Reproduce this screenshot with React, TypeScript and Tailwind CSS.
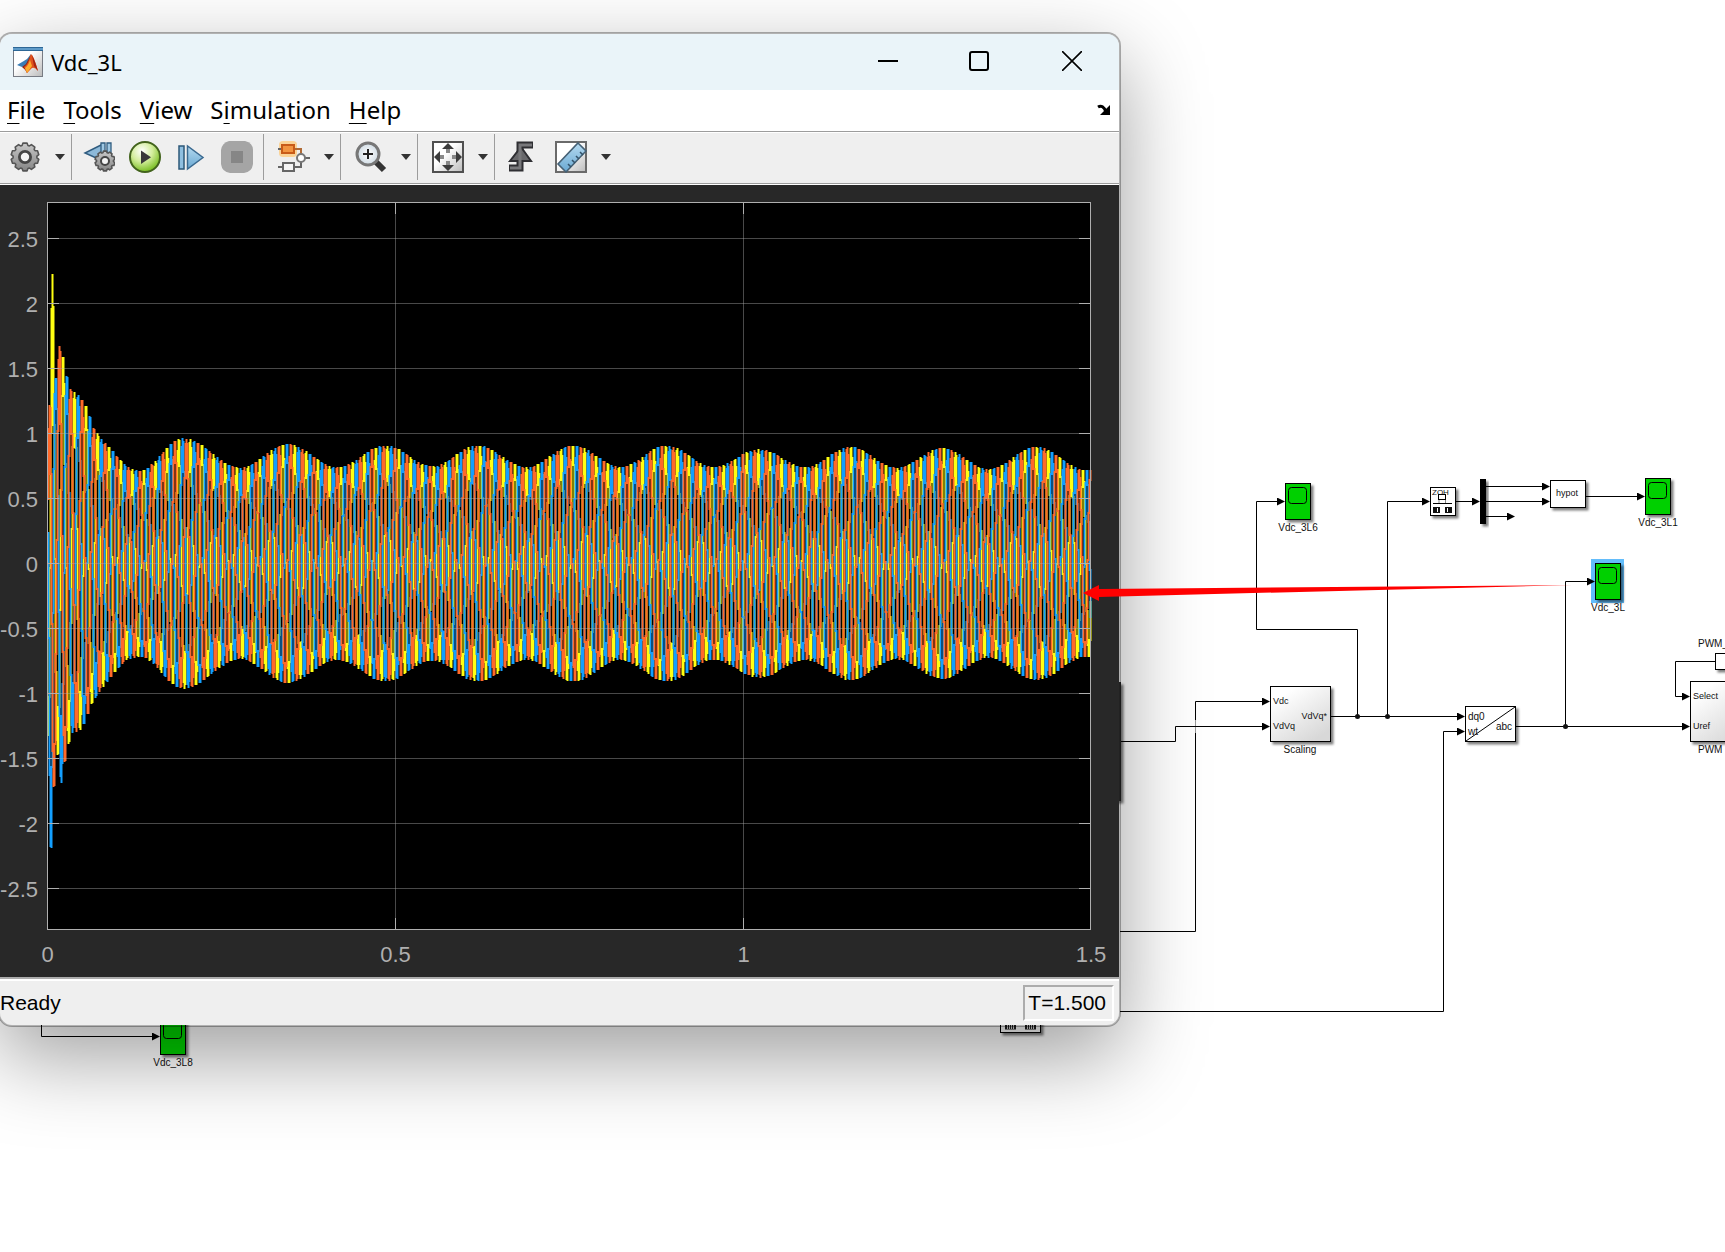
import React from 'react';

const X0 = 47.5, Y0 = 563.5, U = 130, PERIOD = 11.594;
const UP: [number, number][] = [[47, 0.6], [49, 1.2], [52, 2.22], [55, 1.39], [59.5, 1.7], [63, 1.57], [66.5, 1.43], [70, 1.34], [74, 1.31], [78, 1.29], [82, 1.25], [86, 1.2], [90, 1.11], [93, 1.04], [97, 1], [101, 0.95], [109, 0.89], [117, 0.81], [125, 0.75], [131, 0.72], [138, 0.71]];
const DN: [number, number][] = [[47, 1.2], [50.8, 2.27], [54, 1.61], [57, 1.45], [61, 1.69], [65, 1.49], [69, 1.36], [72.5, 1.29], [76, 1.29], [80, 1.27], [84, 1.22], [88, 1.14], [92, 1.06], [96, 1.02], [100, 0.97], [107, 0.9], [115, 0.82], [120, 0.78], [125, 0.74], [131, 0.72], [138, 0.71]];
const SWELL: [number, number][] = [[138, 0.705], [183, 0.955], [240, 0.73], [287, 0.91], [337, 0.735], [385, 0.9], [432, 0.74], [477, 0.9], [526, 0.735], [573, 0.9], [620, 0.735], [666, 0.9], [713, 0.735], [759, 0.87], [805, 0.735], [850, 0.89], [896, 0.73], [942, 0.88], [988, 0.72], [1036, 0.89], [1086, 0.71], [1130, 0.8]];

function envelope(x: number, start: [number, number][]) {
  const tbl = x < 138 ? start : SWELL;
  for (let i = 1; i < tbl.length; i++) {
    if (x <= tbl[i][0]) {
      const [xa, a] = tbl[i - 1], [xb, b] = tbl[i];
      let f = (x - xa) / (xb - xa);
      if (x >= 138) f = (1 - Math.cos(Math.PI * f)) / 2;
      return a + (b - a) * f;
    }
  }
  return 0.75;
}
// Each pixel column holds one bar that spans the signal's minimum and maximum inside that column.
function trace(shift: number) {
  const f = (x: number) => {
    const lag = 1.6 * Math.exp(-(x - 50) / 8);
    const c = Math.cos((2 * Math.PI * (x - lag - 73.92 - shift)) / PERIOD);
    return c * envelope(x, c > 0 ? UP : DN);
  };
  let d = '';
  for (let col = Math.ceil(X0); col < 1091; col++) {
    const v: number[] = [];
    for (let k = 0; k <= 8; k++) v.push(f(col - 0.5 + k / 8));
    const top = Math.round(Y0 - U * Math.max(...v)) - 1;
    const bottom = Math.round(Y0 - U * Math.min(...v)) + 1;
    d += `M${col - 0.5} ${top}h2V${bottom}h-2Z`;
  }
  return d;
}
const TRACES = [
  { color: '#ffff11', d: trace(0) },
  { color: '#139fff', d: trace(PERIOD / 3) },
  { color: '#ff6929', d: trace(-PERIOD / 3) },
];

function ScopePlot() {
  const ys = [2.5, 2, 1.5, 1, 0.5, 0, -0.5, -1, -1.5, -2, -2.5];
  return (
    <svg viewBox="0 185 1119 792" className="block w-full" role="img" aria-label="Vdc_3L waveforms" fontFamily="Liberation Sans, Arial, sans-serif" fontSize="22" fill="#afafaf">
      <rect x="0" y="185" width="1119" height="792" fill="#282828" />
      <rect x="47" y="202" width="1044" height="728" fill="#000" />
      {TRACES.map((t) => <path key={t.color} d={t.d} fill={t.color} />)}
      {ys.map((v) => {
        const y = Y0 + 0 - v * U;
        return (
          <g key={v}>
            <path d={`M48 ${y}H1090`} stroke="#afafaf" strokeOpacity=".42" />
            <path d={`M48 ${y}h11M1090 ${y}h-11`} stroke="#afafaf" />
            <text x="38" y={y + 8.5} textAnchor="end">{v}</text>
          </g>
        );
      })}
      {[395.5, 743.5].map((x) => (
        <g key={x}>
          <path d={`M${x} 203V929`} stroke="#afafaf" strokeOpacity=".42" />
          <path d={`M${x} 203v11M${x} 929v-11`} stroke="#afafaf" />
        </g>
      ))}
      <rect x="47.5" y="202.5" width="1043" height="727" fill="none" stroke="#afafaf" />
      <g textAnchor="middle">
        <text x="47.5" y="962">0</text><text x="395.5" y="962">0.5</text><text x="743.5" y="962">1</text><text x="1091" y="962">1.5</text>
      </g>
    </svg>
  );
}

function Icon({ w = 32, children }: { w?: number; children: React.ReactNode }) {
  return <svg width={w} height="32" viewBox={`0 0 ${w} 32`} className="block" fill="none" aria-hidden="true">{children}</svg>;
}
function Gear({ cx, cy, r }: { cx: number; cy: number; r: number }) {
  const pts: string[] = [];
  for (let i = 0; i < 10; i++) {
    [[-0.4, 0.85], [-0.24, 1], [0.24, 1], [0.4, 0.85]].forEach(([o, k]) => {
      const a = ((i + o) * Math.PI) / 5;
      pts.push(`${(cx + r * k * Math.sin(a)).toFixed(2)},${(cy - r * k * Math.cos(a)).toFixed(2)}`);
    });
  }
  return (
    <g>
      <polygon points={pts.join(' ')} fill="url(#metal)" stroke="#555" strokeWidth="1.6" strokeLinejoin="round" />
      <circle cx={cx} cy={cy} r={r * 0.4} fill="#f4f4f4" stroke="#454545" strokeWidth={r * 0.2} />
    </g>
  );
}
function MatlabIcon() {
  return (
    <svg width="31" height="31" viewBox="0 0 31 31" aria-hidden="true">
      <rect x=".5" y=".5" width="29" height="29" fill="url(#paper)" stroke="#777b83" />
      <rect x="0" y="0" width="30" height="4" fill="#5e9bc9" /><path d="M0 .5H30M0 3.5H30" stroke="#2d6796" />
      <path d="M4 18L10 14.5L14 12L18 7L13 19L9 20Z" fill="#3a7db5" />
      <path d="M9 20L13 17L18 7L17 20L14 26Q12 22 9 20Z" fill="#8e2410" />
      <path d="M18 7Q21 9 25 24Q22 20 19 21L14 26Q12 22 11 20Q15 18 18 7Z" fill="#e1521c" />
      <path d="M17 13L19 19L14 26L12 21Q15 19 17 13Z" fill="#fbab2b" />
      <path d="M19 8Q22 14 25 24L21 19Z" fill="#a62413" />
    </svg>
  );
}
const Caret = ({ label }: { label: string }) => (
  <button aria-label={label} className="flex h-10 w-[22px] items-center justify-center">
    <svg width="10" height="6" viewBox="0 0 10 6"><path d="M0 0H10L5 6Z" fill="#333" /></svg>
  </button>
);
const Tool = ({ label, children }: { label: string; children: React.ReactNode }) => (
  <button aria-label={label} title={label} className="flex h-10 items-center justify-center">{children}</button>
);
const Divider = () => <div className="h-[46px] w-px bg-[#9c9c9c]" />;

function Toolbar() {
  return (
    <div role="toolbar" className="flex h-[51px] items-center border-t border-white bg-[#efefef] pb-0.5 pl-[9px]">
      <div className="flex w-[62px] items-center justify-between">
        <Tool label="Configuration"><Icon><Gear cx={16} cy={16} r={14} /></Icon></Tool>
        <Caret label="Configuration menu" />
      </div>
      <Divider />
      <div className="flex w-[191px] items-center gap-3.5 pl-[11px]">
        <Tool label="Step back">
          <Icon>
            <path d="M20 3V20L2 12Z" fill="#8db9d9" stroke="#315d80" strokeWidth="1.5" />
            <path d="M18 2h4v16h-4ZM24 2h4v16h-4Z" fill="#9fc8e3" stroke="#315d80" strokeWidth="1.3" />
            <Gear cx={22} cy={20} r={10} />
          </Icon>
        </Tool>
        <Tool label="Run">
          <Icon>
            <circle cx="16" cy="16" r="15" fill="url(#run)" stroke="#42631c" strokeWidth="2" />
            <path d="M12 9.500V23L22 16.200Z" fill="#393939" />
          </Icon>
        </Tool>
        <Tool label="Step forward">
          <Icon>
            <path d="M4 5h5v23H4Z" fill="#8fbfe0" stroke="#2d5878" strokeWidth="1.500" />
            <path d="M12.500 5V28L28 16.500Z" fill="url(#blue)" stroke="#3b6a90" strokeWidth="1.500" />
          </Icon>
        </Tool>
        <Tool label="Stop">
          <Icon>
            <path d="M8 0H24Q32 2 32 9V23Q31 31 23 32H9Q1 31 0 23V9Q1 2 8 0Z" fill="#a5a5a5" />
            <rect x="10" y="10" width="12" height="12" fill="#868686" />
          </Icon>
        </Tool>
      </div>
      <Divider />
      <div className="flex w-[76px] items-center justify-between pl-3.5">
        <Tool label="Highlight block">
          <Icon>
            <rect x="1" y="0" width="18" height="16" rx="4" fill="#ffc978" opacity=".75" />
            <path d="M0 8H4M17 8H23V14M23 20V26H16M0 26H5M27 17H32" stroke="#666" strokeWidth="2" />
            <path d="M17 8H23V14" stroke="#b06a35" strokeWidth="2" />
            <rect x="4" y="4" width="12" height="8" fill="#f29440" stroke="#c85b18" strokeWidth="2" />
            <rect x="5" y="22" width="11" height="8" fill="#f5f5f5" stroke="#666" strokeWidth="2" />
            <circle cx="23" cy="17" r="4" fill="#fff" stroke="#777" strokeWidth="2" />
          </Icon>
        </Tool>
        <Caret label="Highlight menu" />
      </div>
      <Divider />
      <div className="flex w-[76px] items-center justify-between pl-3.5">
        <Tool label="Zoom">
          <Icon>
            <path d="M20 20L29 29" stroke="#343434" strokeWidth="6" />
            <circle cx="13" cy="13" r="11" fill="url(#lens)" stroke="#777" strokeWidth="3" />
            <path d="M13 8V18M8 13H18" stroke="#222" strokeWidth="2" />
          </Icon>
        </Tool>
        <Caret label="Zoom menu" />
      </div>
      <Divider />
      <div className="flex w-[76px] items-center justify-between pl-3.5">
        <Tool label="Scale axes">
          <Icon>
            <rect x="1" y="1" width="30" height="30" fill="url(#paper)" stroke="#505050" strokeWidth="2" />
            <path d="M16 2L22 8H10ZM16 30L22 24H10ZM2 16L8 10V22ZM30 16L24 10V22Z" fill="#3c3c3c" />
            <path d="M16 8V12M16 20V24M8 16H12M20 16H24" stroke="#888" strokeWidth="4" />
          </Icon>
        </Tool>
        <Caret label="Scale menu" />
      </div>
      <Divider />
      <div className="flex items-center gap-[18px] pl-2.5">
        <Tool label="Trigger">
          <Icon>
            <path d="M4 27H15V4H28" stroke="#2f2f33" strokeWidth="7" />
            <path d="M16 6L26 20H5Z" fill="#68686b" stroke="#2f2f33" strokeWidth="2" />
            <path d="M5 27H15V4H27" stroke="#78787b" strokeWidth="3" />
          </Icon>
        </Tool>
        <Tool label="Measurements">
          <Icon>
            <rect x="1" y="1" width="30" height="30" fill="url(#paper)" stroke="#6a6a6a" strokeWidth="2" />
            <path d="M23 2L31 10L11 31L3 23Z" fill="url(#blue)" stroke="#466175" strokeWidth="1.600" />
            <path d="M28 14L25 11M24 18L21 15M20 22L17 19M16 26L13 23" stroke="#33536b" strokeWidth="1.500" />
          </Icon>
        </Tool>
      </div>
      <div className="pl-2"><Caret label="Measurements menu" /></div>
    </div>
  );
}

function Scope({ x, y, label }: { x: number; y: number; label: string }) {
  return (
    <g>
      <rect x={x + 0.5} y={y + 0.5} width="25" height="36" fill="#00d000" stroke="#000" filter="url(#drop)" />
      <rect x={x + 3.5} y={y + 4.5} width="18" height="16" rx="3" fill="none" stroke="#000" />
      <text x={x + 13} y={y + 48} textAnchor="middle">{label}</text>
    </g>
  );
}
function Wire({ d }: { d: string }) {
  return <path d={d} fill="none" stroke="#000" markerEnd="url(#arrow)" />;
}

function Diagram() {
  return (
    <svg width="1725" height="1252" viewBox="0 0 1725 1252" className="block max-w-none" role="img" aria-label="Simulink block diagram" fontFamily="Liberation Sans, Arial, sans-serif" fontSize="10" fill="#111">
      <defs>
        <marker id="arrow" markerUnits="userSpaceOnUse" markerWidth="8" markerHeight="8" refX="7" refY="4" orient="auto"><path d="M0 0L8 4L0 8Z" fill="#000" /></marker>
        <filter id="drop" x="-30%" y="-30%" width="180%" height="180%"><feDropShadow dx="2.500" dy="2.500" stdDeviation="1" floodColor="#000" floodOpacity=".5" /></filter>
        <linearGradient id="block" x1="0" y1="0" x2=".7" y2="1"><stop offset=".2" stopColor="#fff" /><stop offset="1" stopColor="#d8d8d8" /></linearGradient>
        <linearGradient id="paper" x1="0" y1="0" x2="1" y2="1"><stop offset=".4" stopColor="#fff" /><stop offset="1" stopColor="#bbb" /></linearGradient>
        <linearGradient id="metal" x1="0" y1="0" x2="0" y2="1"><stop stopColor="#c8c8c8" /><stop offset="1" stopColor="#858585" /></linearGradient>
        <linearGradient id="blue" x1="0" y1="0" x2="0" y2="1"><stop stopColor="#b5daf0" /><stop offset="1" stopColor="#69a8d2" /></linearGradient>
        <radialGradient id="run" cx=".4" cy=".3" r=".7"><stop stopColor="#fff" /><stop offset=".5" stopColor="#d3ee9c" /><stop offset="1" stopColor="#78bd22" /></radialGradient>
        <radialGradient id="lens"><stop stopColor="#fff" /><stop offset="1" stopColor="#cfdbe4" /></radialGradient>
      </defs>
      <Wire d="M1120 931.500H1195.500V701.500H1269" />
      <rect x="1192" y="720" width="7" height="13" fill="#fff" opacity=".6" />
      <Wire d="M1120 741.500H1175.500V726.500H1269" />
      <Wire d="M1120 1011.500H1443.500V731.500H1464" />
      <Wire d="M1331 716.500H1464" />
      <Wire d="M1357.500 716V629.500H1256.500V501.500H1284" />
      <Wire d="M1387.500 716V501.500H1429" />
      <Wire d="M1456 501.500H1479" />
      <Wire d="M1486 486.500H1549" />
      <Wire d="M1486 501.500H1549" />
      <Wire d="M1486 516.500H1514" />
      <Wire d="M1586 496.500H1644" />
      <Wire d="M1516 726.500H1689" />
      <rect x="1591" y="559" width="33" height="44" fill="#63bdfb" />
      <Wire d="M1565.500 726V581.500H1594" />
      <Wire d="M1715 661.500H1675.500V696.500H1689" />
      <Wire d="M41.500 1020V1036.500H159" />
      <circle cx="1357.500" cy="716.500" r="2.500" /><circle cx="1387.500" cy="716.500" r="2.500" /><circle cx="1565.500" cy="726.500" r="2.500" />
      <Scope x={1285} y={483} label="Vdc_3L6" />
      <Scope x={1645} y={478} label="Vdc_3L1" />
      <Scope x={1595} y={563} label="Vdc_3L" />
      <Scope x={160} y={1018} label="Vdc_3L8" />
      <rect x="1270.500" y="686.500" width="60" height="55" fill="url(#block)" stroke="#000" filter="url(#drop)" />
      <g fontSize="9">
        <text x="1273" y="704">Vdc</text><text x="1273" y="729">VdVq</text><text x="1327" y="719" textAnchor="end">VdVq*</text>
      </g>
      <text x="1300" y="753" textAnchor="middle">Scaling</text>
      <rect x="1465.500" y="706.500" width="50" height="35" fill="#fff" stroke="#000" filter="url(#drop)" />
      <path d="M1466 741L1515 707" stroke="#000" />
      <text x="1468" y="720">dq0</text><text x="1468" y="735">wt</text><text x="1512" y="730" textAnchor="end">abc</text>
      <rect x="1430.500" y="487.500" width="25" height="28" fill="#fff" stroke="#000" filter="url(#drop)" />
      <text x="1432" y="495" fontSize="8">ZOH</text>
      <path d="M1439 499V503M1445.500 499V503" stroke="#888" />
      <rect x="1438.500" y="494.500" width="7" height="5" fill="#fff" stroke="#000" />
      <path d="M1433 503.500H1452" stroke="#000" />
      <rect x="1433" y="507" width="7" height="6" /><rect x="1445" y="507" width="7" height="6" />
      <path d="M1437.500 508V512M1447.500 508V512" stroke="#fff" />
      <rect x="1480" y="479" width="6" height="45" fill="#000" filter="url(#drop)" />
      <rect x="1550.500" y="480.500" width="35" height="27" fill="#fff" stroke="#000" filter="url(#drop)" />
      <text x="1567" y="496" textAnchor="middle" fontSize="9">hypot</text>
      <rect x="1715.500" y="653.500" width="30" height="16" fill="#fff" stroke="#000" filter="url(#drop)" />
      <rect x="1690.500" y="681.500" width="60" height="60" fill="url(#block)" stroke="#000" filter="url(#drop)" />
      <g fontSize="9"><text x="1693" y="699">Select</text><text x="1693" y="729">Uref</text></g>
      <text x="1698" y="647">PWM_</text><text x="1698" y="753">PWM</text>
      <rect x="1000.500" y="1000.500" width="40" height="32" fill="#fff" stroke="#000" filter="url(#drop)" />
      <path d="M1005 1026.500h11M1025 1026.500h11" stroke="#222" strokeWidth="6" />
      <path d="M1007.500 1024v5M1009.500 1024v5M1011.500 1024v5M1013.500 1024v5M1027.500 1024v5M1029.500 1024v5M1031.500 1024v5M1033.500 1024v5" stroke="#fff" strokeWidth=".8" />
      <rect x="1090" y="682" width="31" height="119" fill="#333" filter="url(#drop)" />
    </svg>
  );
}

const MENUS = [['', 'F', 'ile'], ['', 'T', 'ools'], ['', 'V', 'iew'], ['S', 'i', 'mulation'], ['', 'H', 'elp']];

export default function App() {
  return (
    <main className="relative min-h-screen overflow-hidden bg-white text-black">
      <Diagram />
      <section aria-label="Vdc_3L" className="absolute top-8 -left-0.5 w-[1123px] overflow-hidden rounded-[14px] border-2 border-black/30 bg-[#efefef] bg-clip-padding shadow-[0_30px_84px_rgba(0,0,0,0.38)]">
        <header className="flex h-14 items-center bg-[#eaf4f9] pl-[13px]">
          <MatlabIcon />
          <h1 className="pl-[7px] font-['Noto_Sans'] text-[22px]">Vdc_3L</h1>
          <div className="ml-auto flex pb-0.5">
            <button aria-label="Minimize" className="flex h-13 w-[91px] items-center justify-center"><svg width="20" height="20"><path d="M0 10H20" stroke="#000" strokeWidth="2" /></svg></button>
            <button aria-label="Maximize" className="flex h-13 w-[92px] items-center justify-center"><svg width="20" height="20"><rect x="1" y="1" width="18" height="18" rx="2" fill="none" stroke="#000" strokeWidth="2" /></svg></button>
            <button aria-label="Close" className="flex h-13 w-[94px] items-center justify-center"><svg width="20" height="20"><path d="M0 0L20 20M20 0L0 20" stroke="#000" strokeWidth="1.600" /></svg></button>
          </div>
        </header>
        <nav className="flex h-[42px] items-center gap-[18px] border-b border-[#9c9c9c] bg-white pb-0.5 pl-[7px] font-['Noto_Sans'] text-[24px]">
          {MENUS.map(([a, k, b]) => (
            <button key={k + b} className="leading-8">{a}<span className="underline decoration-1 underline-offset-4">{k}</span>{b}</button>
          ))}
          <button aria-label="Dock" className="mr-2 ml-auto"><svg width="14" height="12" viewBox="0 0 14 12"><path d="M1 3Q6 0 9 8" stroke="#000" strokeWidth="3" fill="none" /><path d="M13 1V11H3Z" /></svg></button>
        </nav>
        <Toolbar />
        <div className="border-t border-b-2 border-t-[#9c9c9c] border-b-[#acacac] bg-white pt-px"><ScopePlot /></div>
        <footer className="flex h-[46px] items-center justify-between border-t-2 border-white pr-[5px] font-['Liberation_Sans'] text-[21px]">
          <span>Ready</span>
          <span className="border-2 border-t-[#acacac] border-r-white border-b-white border-l-[#acacac] pr-1.5 pl-[3px] leading-8">T=1.500</span>
        </footer>
      </section>
      <svg width="520" height="24" viewBox="1080 580 520 24" className="absolute top-[580px] left-[1080px]" aria-hidden="true">
        <path d="M1083 593L1099 585V589L1572 585L1099 597V601Z" fill="#f00" />
      </svg>
    </main>
  );
}
